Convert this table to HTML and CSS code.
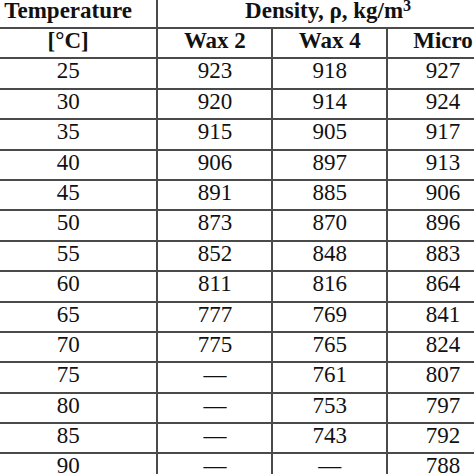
FILE: index.html
```html
<!DOCTYPE html>
<html>
<head>
<meta charset="utf-8">
<link rel="stylesheet" href="styles.css">
</head>
<body>
<div class="table">
  <div class="cell head">Temperature</div>
  <div class="cell head span3">Density, ρ, kg/m<sup>3</sup></div>

  <div class="cell head">[°C]</div>
  <div class="cell head">Wax 2</div>
  <div class="cell head">Wax 4</div>
  <div class="cell head">Micro</div>

  <div class="cell">25</div><div class="cell">923</div><div class="cell">918</div><div class="cell">927</div>
  <div class="cell">30</div><div class="cell">920</div><div class="cell">914</div><div class="cell">924</div>
  <div class="cell">35</div><div class="cell">915</div><div class="cell">905</div><div class="cell">917</div>
  <div class="cell">40</div><div class="cell">906</div><div class="cell">897</div><div class="cell">913</div>
  <div class="cell">45</div><div class="cell">891</div><div class="cell">885</div><div class="cell">906</div>
  <div class="cell">50</div><div class="cell">873</div><div class="cell">870</div><div class="cell">896</div>
  <div class="cell">55</div><div class="cell">852</div><div class="cell">848</div><div class="cell">883</div>
  <div class="cell">60</div><div class="cell">811</div><div class="cell">816</div><div class="cell">864</div>
  <div class="cell">65</div><div class="cell">777</div><div class="cell">769</div><div class="cell">841</div>
  <div class="cell">70</div><div class="cell">775</div><div class="cell">765</div><div class="cell">824</div>
  <div class="cell">75</div><div class="cell">—</div><div class="cell">761</div><div class="cell">807</div>
  <div class="cell">80</div><div class="cell">—</div><div class="cell">753</div><div class="cell">797</div>
  <div class="cell">85</div><div class="cell">—</div><div class="cell">743</div><div class="cell">792</div>
  <div class="cell">90</div><div class="cell">—</div><div class="cell">—</div><div class="cell">788</div>
</div>
</body>
</html>
```
FILE: styles.css
```css
html, body {
  margin: 0;
  padding: 0;
  background: #ffffff;
  overflow: hidden;
  width: 474px;
  height: 474px;
}

.table {
  display: grid;
  grid-template-columns: 178.3px 115.2px 114.5px 112px;
  grid-auto-rows: 30.4px;
  margin-top: -1.4px;
  margin-left: -20px;
  width: 520px;
  font-family: "Liberation Serif", "Times New Roman", serif;
  font-size: 23px;
  line-height: 24px;
  color: #111111;
}

.cell {
  box-sizing: border-box;
  border-bottom: 2px solid #4a4a4a;
  border-right: 2px solid #4a4a4a;
  text-align: center;
  white-space: nowrap;
}

.head {
  font-weight: bold;
}

.span3 {
  grid-column: span 3;
}

sup {
  font-size: 0.7em;
  line-height: 0;
  vertical-align: 0.45em;
}
```
